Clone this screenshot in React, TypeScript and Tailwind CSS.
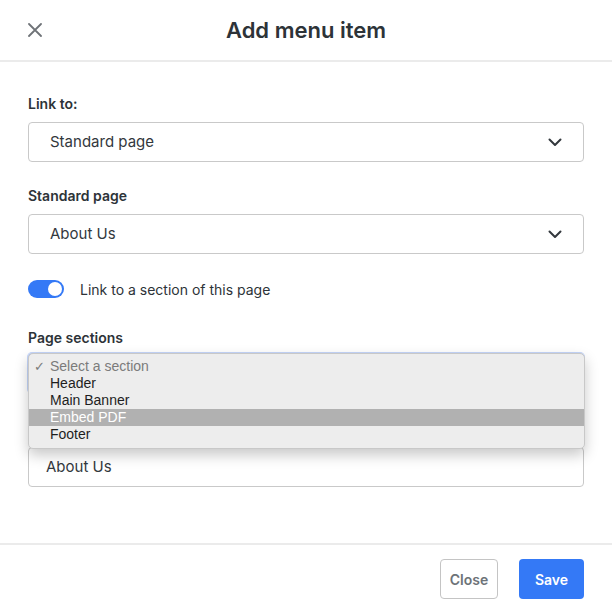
import * as React from "react";

const Chevron = () => (
  <svg width="14" height="9" viewBox="0 0 14 9" fill="none">
    <path d="M1.5 1.5L7 7L12.5 1.5" stroke="#33383d" strokeWidth="2" strokeLinecap="round" strokeLinejoin="round" />
  </svg>
);

const SelectBox = ({ value, focus }: { value: string; focus?: boolean }) => (
  <div
    className={
      focus
        ? "flex h-[40px] items-center justify-between rounded-[4px] border border-[#9db8f3] px-[21px] shadow-[0_0_0_1px_#c5d6fa]"
        : "flex h-[40px] items-center justify-between rounded-[4px] border border-[#c9c9c9] px-[21px]"
    }
  >
    <span className="text-[15px] text-[#33383d]">{value}</span>
    <Chevron />
  </div>
);

const Label = ({ children }: { children: React.ReactNode }) => (
  <div className="text-[14px] leading-[20px] font-semibold text-[#2d3338]">{children}</div>
);

const options = ["Header", "Main Banner", "Embed PDF", "Footer"];

const App = () => {
  return (
    <div className="relative flex h-[613px] w-[612px] flex-col bg-white font-['Inter',sans-serif]">
      {/* header */}
      <div className="relative flex h-[62px] items-center justify-center border-b-2 border-[#ebebeb]">
        <svg className="absolute left-[28px] top-[23px]" width="14" height="14" viewBox="0 0 14 14">
          <path d="M1 1L13 13M13 1L1 13" stroke="#6f7378" strokeWidth="1.8" strokeLinecap="round" />
        </svg>
        <h1 className="text-[22px] font-semibold text-[#2d3338]">Add menu item</h1>
      </div>

      {/* body */}
      <div className="flex flex-1 flex-col px-[28px] pt-[32px]">
        <Label>Link to:</Label>
        <div className="mt-[8px]">
          <SelectBox value="Standard page" />
        </div>

        <div className="mt-[24px]">
          <Label>Standard page</Label>
        </div>
        <div className="mt-[8px]">
          <SelectBox value="About Us" />
        </div>

        <div className="mt-[25px] flex h-[20px] items-center gap-[16px]">
          <div className="flex h-[18px] w-[36px] items-center justify-end rounded-full bg-[#3479f6] pr-[2px]">
            <div className="h-[14px] w-[14px] rounded-full bg-white" />
          </div>
          <span className="text-[14px] text-[#2d3338]">Link to a section of this page</span>
        </div>

        <div className="mt-[29px]">
          <Label>Page sections</Label>
        </div>
        <div className="mt-[5px]">
          <SelectBox value="" focus />
        </div>

        {/* field hidden under the open popup */}
        <div className="mt-[54px] flex h-[40px] items-center rounded-[4px] border border-[#c9c9c9] px-[17px]">
          <span className="text-[15px] text-[#33383d]">About Us</span>
        </div>
      </div>

      {/* footer */}
      <div className="flex h-[70px] items-center justify-end gap-[21px] border-t-2 border-[#ebebeb] px-[28px]">
        <button className="h-[40px] w-[58px] rounded-[4px] border border-[#c4c4c4] text-[14px] font-semibold text-[#6d7378]">
          Close
        </button>
        <button className="h-[40px] w-[65px] rounded-[4px] bg-[#3479f6] text-[14px] font-semibold text-white">
          Save
        </button>
      </div>

      {/* native select popup */}
      <div className="absolute left-[28px] top-[353px] w-[557px] rounded-[5px] border border-[#c8c8c8] bg-[#ededed] pt-[4px] pb-[5px] font-['Liberation_Sans',sans-serif] text-[14px] leading-[17px] shadow-[0_6px_14px_rgba(0,0,0,0.22)]">
        <div className="flex h-[17px] items-center text-[#7b7b7b]">
          <span className="w-[21px] pl-[5px] text-[13px]">✓</span>
          <span>Select a section</span>
        </div>
        {options.map((o) => (
          <div
            key={o}
            className={
              o === "Embed PDF"
                ? "flex h-[17px] items-center bg-[#b1b1b1] pl-[21px] text-white"
                : "flex h-[17px] items-center pl-[21px] text-[#1e1e1e]"
            }
          >
            {o}
          </div>
        ))}
      </div>
    </div>
  );
};

export default App;
